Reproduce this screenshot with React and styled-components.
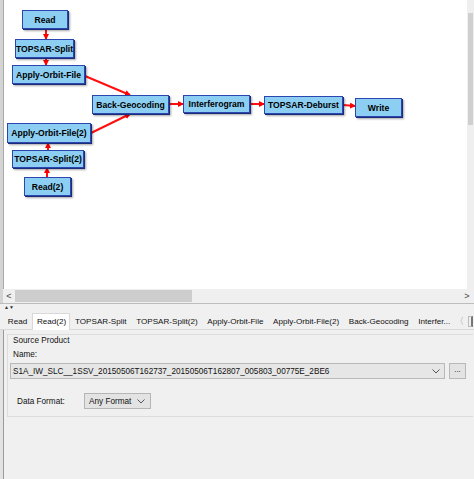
import React from 'react'
import styled, { createGlobalStyle } from 'styled-components'

const Global = createGlobalStyle`
  html, body { margin: 0; padding: 0; background: #ffffff; }
  body { font-family: "Liberation Sans", Arial, sans-serif; }
`

const Frame = styled.div`
  width: 474px;
  height: 479px;
  display: flex;
  flex-direction: column;
  overflow: hidden;
  background: #f0f0f0;
  box-sizing: border-box;
`

const CanvasRow = styled.div`
  display: flex;
  height: 289px;
  border-left: 3px solid #d4d4d4;
  box-sizing: border-box;
`

const Canvas = styled.div`
  position: relative;
  flex: 1;
  background: #ffffff;
  border-left: 1px solid #a8a8a8;
`

const VScroll = styled.div`
  width: 7px;
  background: #efefef;
  display: flex;
  flex-direction: column;
  padding-top: 13px;
  box-sizing: border-box;
`

const VThumb = styled.div`
  height: 112px;
  margin: 0 1px;
  background: #cfcfcf;
`

const HScroll = styled.div`
  height: 14px;
  display: flex;
  align-items: center;
  background: #efefef;
  border-left: 3px solid #d4d4d4;
  font-size: 9px;
  color: #444;
`

const ScrollArrow = styled.span`
  width: ${p => p.$w}px;
  text-align: center;
  line-height: 14px;
`

const HThumb = styled.div`
  width: 177px;
  height: 12px;
  background: #cdcdcd;
`

const Spacer = styled.div`
  flex: 1;
`

const Splitter = styled.div`
  height: 8px;
  border-top: 1px solid #bdbdbd;
  display: flex;
  align-items: flex-start;
  padding-left: 4px;
  font-size: 5px;
  line-height: 6px;
  color: #333;
  background: #f0f0f0;
`

const TabBar = styled.div`
  height: 17px;
  display: flex;
  align-items: flex-end;
  padding-left: 3px;
  border-bottom: 1px solid #d9d9d9;
  font-size: 8.1px;
  white-space: nowrap;
`

const Tab = styled.div`
  height: ${p => (p.$active ? 16 : 15)}px;
  line-height: 15px;
  padding-left: ${p => (p.$active ? 4 : 3.8)}px;
  padding-right: ${p => (p.$active ? 3 : 3.8)}px;
  background: ${p => (p.$active ? '#ffffff' : 'transparent')};
  border: 1px solid ${p => (p.$active ? '#d9d9d9' : 'transparent')};
  border-bottom: none;
  color: #111;
  margin-bottom: ${p => (p.$active ? -1 : 0)}px;
`

const TabNav = styled.div`
  margin-left: auto;
  display: flex;
  align-items: center;
  height: 15px;
  gap: 4px;
  padding-right: 2px;
  color: #888;
  font-size: 9px;
`

const TabNavBox = styled.span`
  border: 1px solid #bbb;
  border-right: 2px solid #777;
  height: 11px;
  width: 5px;
  box-sizing: border-box;
`

const Panel = styled.div`
  flex: 1;
  display: flex;
  flex-direction: column;
  padding: 4px 1px 2px 4px;
  border-left: 3px solid #e2e2e2;
  box-shadow: inset 1px 0 0 #9a9a9a;
  font-size: 8.2px;
  color: #111;
  box-sizing: border-box;
`

const Group = styled.div`
  border: 1px solid #dcdcdc;
  border-right: none;
  padding: 0 4px 7px 2px;
  display: flex;
  flex-direction: column;
`

const GroupTitle = styled.div`
  height: 12px;
  line-height: 12px;
  padding-left: 3px;
  margin-bottom: 2px;
`

const Label = styled.div`
  height: 12px;
  line-height: 12px;
  margin-bottom: 2px;
  padding-left: 3px;
`

const Row = styled.div`
  display: flex;
  align-items: center;
  gap: ${p => p.$gap || 4}px;
`

const Combo = styled.div`
  flex: 1;
  height: 16px;
  display: flex;
  align-items: center;
  justify-content: space-between;
  padding: 0 4px 0 2px;
  background: #e6e6e6;
  border: 1px solid #b8b8b8;
  box-sizing: border-box;
  white-space: nowrap;
  overflow: hidden;
`

const Chevron = styled.svg`
  width: 8px;
  height: 5px;
  flex: none;
`

const DotsButton = styled.div`
  width: 17px;
  height: 16px;
  box-sizing: border-box;
  border: 1px solid #b8b8b8;
  background: #e3e3e3;
  text-align: center;
  line-height: 12px;
  font-size: 8px;
  margin-right: 3px;
`

const FormatRow = styled(Row)`
  margin-top: 14px;
  padding-left: 7px;
`

const FormatLabel = styled.span`
  width: 62px;
`

const Select = styled.div`
  height: 16px;
  display: flex;
  align-items: center;
  gap: 6px;
  padding: 0 5px 0 4px;
  background: #e3e3e3;
  border: 1px solid #b5b5b5;
  box-sizing: border-box;
`

const Node = styled.div`
  position: absolute;
  left: ${p => p.$x}px;
  top: ${p => p.$y}px;
  width: ${p => p.$w}px;
  height: ${p => p.$h}px;
  display: flex;
  align-items: center;
  justify-content: center;
  box-sizing: border-box;
  background: #8ccff3;
  border: 1px solid #2c46b0;
  box-shadow: 1px 1px 0 #1b2c7a, 2px 2px 2px rgba(0, 0, 0, 0.35);
  font-weight: bold;
  font-size: 8.6px;
  color: #000;
  white-space: nowrap;
`

const Wires = styled.svg`
  position: absolute;
  left: -4px;
  top: 0;
  width: 467px;
  height: 289px;
  pointer-events: none;
`

// node and wire coordinates are taken in page pixels; the canvas starts at x=4
const nodes = [
  { label: 'Read', x: 22, y: 10, w: 46, h: 19 },
  { label: 'TOPSAR-Split', x: 15, y: 39, w: 59, h: 19 },
  { label: 'Apply-Orbit-File', x: 12, y: 65, w: 73, h: 19 },
  { label: 'Back-Geocoding', x: 92, y: 95, w: 77, h: 19 },
  { label: 'Interferogram', x: 183, y: 95, w: 67, h: 18 },
  { label: 'TOPSAR-Deburst', x: 264, y: 96, w: 79, h: 18 },
  { label: 'Write', x: 355, y: 98, w: 47, h: 19 },
  { label: 'Apply-Orbit-File(2)', x: 7, y: 123, w: 84, h: 20 },
  { label: 'TOPSAR-Split(2)', x: 12, y: 150, w: 72, h: 18 },
  { label: 'Read(2)', x: 24, y: 177, w: 47, h: 19 },
]

const wires = [
  [46, 29, 46, 39],
  [46, 58, 46, 65],
  [85, 76, 130, 95],
  [91, 133, 130, 114],
  [48, 150, 48, 143],
  [47, 177, 47, 168],
  [169, 104, 183, 104],
  [250, 104, 264, 104],
  [343, 105, 355, 106],
]

const tabs = ['Read', 'Read(2)', 'TOPSAR-Split', 'TOPSAR-Split(2)', 'Apply-Orbit-File', 'Apply-Orbit-File(2)', 'Back-Geocoding', 'Interfer...']

const ChevronIcon = () => (
  <Chevron viewBox="0 0 8 5">
    <path d="M0.5 0.5 L4 4 L7.5 0.5" fill="none" stroke="#555" strokeWidth="1" />
  </Chevron>
)

export default function App() {
  return (
    <Frame>
      <Global />
      <CanvasRow>
        <Canvas>
          <Wires viewBox="0 0 467 289">
            <defs>
              <marker id="head" markerWidth="6" markerHeight="6" refX="5" refY="3" orient="auto" markerUnits="userSpaceOnUse">
                <path d="M0 0 L6 3 L0 6 Z" fill="#ff0000" />
              </marker>
            </defs>
            {wires.map(([x1, y1, x2, y2], i) => (
              <line key={i} x1={x1} y1={y1} x2={x2} y2={y2} stroke="#ff1010" strokeWidth="2" markerEnd="url(#head)" />
            ))}
          </Wires>
          {nodes.map(n => (
            <Node key={n.label} $x={n.x - 4} $y={n.y} $w={n.w} $h={n.h}>{n.label}</Node>
          ))}
        </Canvas>
        <VScroll>
          <VThumb />
        </VScroll>
      </CanvasRow>
      <HScroll>
        <ScrollArrow $w={12}>&lt;</ScrollArrow>
        <HThumb />
        <Spacer />
        <ScrollArrow $w={14}>&gt;</ScrollArrow>
      </HScroll>
      <Splitter>▲▼</Splitter>
      <TabBar>
        {tabs.map(t => (
          <Tab key={t} $active={t === 'Read(2)'}>{t}</Tab>
        ))}
        <TabNav>
          <span>〈</span>
          <TabNavBox />
        </TabNav>
      </TabBar>
      <Panel>
        <Group>
          <GroupTitle>Source Product</GroupTitle>
          <Label>Name:</Label>
          <Row $gap={4}>
            <Combo>
              <span>S1A_IW_SLC__1SSV_20150506T162737_20150506T162807_005803_00775E_2BE6</span>
              <ChevronIcon />
            </Combo>
            <DotsButton>...</DotsButton>
          </Row>
          <FormatRow $gap={5}>
            <FormatLabel>Data Format:</FormatLabel>
            <Select>
              <span>Any Format</span>
              <ChevronIcon />
            </Select>
          </FormatRow>
        </Group>
      </Panel>
    </Frame>
  )
}
